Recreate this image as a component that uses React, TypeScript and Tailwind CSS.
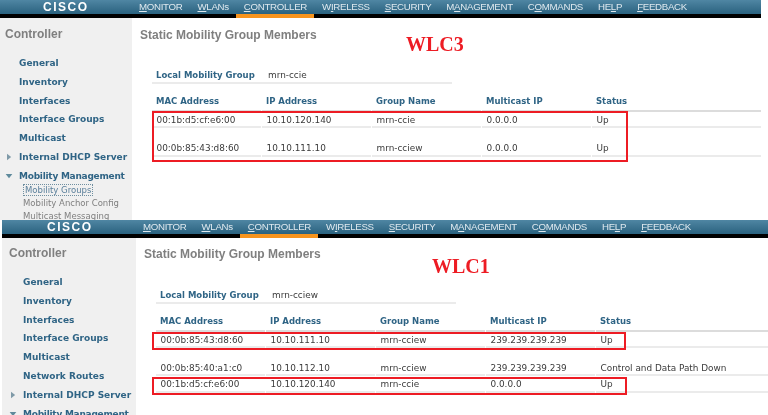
import React from 'react';

const navItems: [string, string, string][] = [
  ['', 'M', 'ONITOR'],
  ['', 'W', 'LANs'],
  ['', 'C', 'ONTROLLER'],
  ['W', 'I', 'RELESS'],
  ['', 'S', 'ECURITY'],
  ['M', 'A', 'NAGEMENT'],
  ['C', 'O', 'MMANDS'],
  ['HE', 'L', 'P'],
  ['', 'F', 'EEDBACK'],
];

function Nav() {
  return (
    <div className="h-[18px] flex border-b-[4px] border-black bg-gradient-to-b from-[#4f86a3] to-[#2a627f] shrink-0">
      <div className="w-[141px] pl-[45px] shrink-0 text-[12px] leading-[15px] font-bold tracking-[1.5px] text-white font-['Liberation_Sans',sans-serif]">
        CISCO
      </div>
      <div className="flex gap-[15px] font-['Liberation_Sans',sans-serif] text-[9.7px] tracking-[-0.3px] leading-[13px] text-[#dfe9ef]">
        {navItems.map(([a, b, c]) => (
          <div key={b + c} className="relative h-[18px] whitespace-nowrap">
            {a}
            <span className="underline">{b}</span>
            {c}
            {b === 'C' && <div className="absolute -left-[8px] -right-[7px] top-[14px] h-[4px] bg-[#f7941d]" />}
          </div>
        ))}
      </div>
    </div>
  );
}

function Side({ items, titlePad }: { items: string[]; titlePad: string }) {
  return (
    <div className="w-[134px] shrink-0 bg-[#f0f0f0] font-['DejaVu_Sans',sans-serif]">
      <div className={`pl-[7px] ${titlePad} text-[12px] leading-[16px] font-bold text-[#7f7f7f] font-['Liberation_Sans',sans-serif]`}>Controller</div>
      <div className="pt-[12px] pl-[21px]">
        {items.map((t) => (
          <div key={t} className="relative h-[18.8px] text-[9px] leading-[18.8px] font-bold text-[#2f6485] whitespace-nowrap">
            {t === 'Internal DHCP Server' && (
              <svg viewBox="0 0 6 8" className="absolute -left-[12px] top-[5px] w-[5px] h-[8px]"><path d="M0 0l5 4-5 4z" fill="#7f9aa8" /></svg>
            )}
            {t}
          </div>
        ))}
        <div className="relative text-[9px] tracking-[-0.25px] leading-[16px] mt-[1px] font-bold text-[#2f6485] whitespace-nowrap">
          <svg viewBox="0 0 8 6" className="absolute -left-[14px] top-[6px] w-[8px] h-[5px]"><path d="M0 0h8l-4 5z" fill="#5f8a9c" /></svg>
          Mobility Management
        </div>
        <div className="text-[8.5px] leading-[13px] text-[#7f7f7f] whitespace-nowrap">
          <div className="pl-[4px]"><span className="border border-dotted border-[#6f8fa0] px-px text-[#5a7f9a]">Mobility Groups</span></div>
          <div className="pl-[4px]">Mobility Anchor Config</div>
          <div className="pl-[4px]">Multicast Messaging</div>
        </div>
      </div>
    </div>
  );
}

const cols = 'grid grid-cols-[109px_109px_109px_109px_1fr] gap-x-px';

function Row({ cells, h }: { cells: string[]; h: string }) {
  return (
    <div className={cols}>
      {cells.map((c, i) => (
        <div key={i} className={`${h} pl-[4.5px] border-b-2 border-[#ebebeb] whitespace-nowrap text-[8.9px] text-[#3a3a3a]`}>
          {c}
        </div>
      ))}
    </div>
  );
}

function Members({ group, rows, titlePad, localGap }: { group: string; rows: { cells: string[]; h: string }[]; titlePad: string; localGap: string }) {
  return (
    <div className="flex-1 font-['DejaVu_Sans',sans-serif]">
      <div className={`pl-[8px] ${titlePad} text-[12px] leading-[16px] font-bold text-[#7f7f7f] font-['Liberation_Sans',sans-serif]`}>Static Mobility Group Members</div>
      <div className={`${localGap} ml-[20px] w-[300px] h-[16px] flex gap-[13px] border-b-2 border-[#ebebeb] text-[8.5px] leading-[15px]`}>
        <div className="w-[103px] pl-[4px] font-bold text-[#2f6485] whitespace-nowrap">Local Mobility Group</div>
        <div className="text-[8.9px] text-[#3a3a3a]">{group}</div>
      </div>
      <div className="ml-[20px] mt-[9px]">
        <div className={cols}>
          {['MAC Address', 'IP Address', 'Group Name', 'Multicast IP', 'Status'].map((c) => (
            <div key={c} className="h-[19px] pt-px pl-[4px] border-b-2 border-[#dcdcdc] text-[8.5px] leading-[15px] font-bold text-[#2f6485]">{c}</div>
          ))}
        </div>
        {rows.map((r) => (
          <Row key={r.cells[0]} cells={r.cells} h={r.h} />
        ))}
      </div>
    </div>
  );
}

const wlc3 = [
  { cells: ['00:1b:d5:cf:e6:00', '10.10.120.140', 'mrn-ccie', '0.0.0.0', 'Up'], h: 'h-[16px] leading-[16px]' },
  { cells: ['00:0b:85:43:d8:60', '10.10.111.10', 'mrn-cciew', '0.0.0.0', 'Up'], h: 'h-[29px] pt-[13px] leading-[14px]' },
];

const wlc1 = [
  { cells: ['00:0b:85:43:d8:60', '10.10.111.10', 'mrn-cciew', '239.239.239.239', 'Up'], h: 'h-[16px] leading-[16px]' },
  { cells: ['00:0b:85:40:a1:c0', '10.10.112.10', 'mrn-cciew', '239.239.239.239', 'Control and Data Path Down'], h: 'h-[28px] pt-[13px] leading-[14px]' },
  { cells: ['00:1b:d5:cf:e6:00', '10.10.120.140', 'mrn-ccie', '0.0.0.0', 'Up'], h: 'h-[17px] leading-[17px]' },
];

const sideTop = ['General', 'Inventory', 'Interfaces', 'Interface Groups', 'Multicast', 'Internal DHCP Server'];
const sideBottom = ['General', 'Inventory', 'Interfaces', 'Interface Groups', 'Multicast', 'Network Routes', 'Internal DHCP Server'];

function Label({ text, cls }: { text: string; cls: string }) {
  return <div className={`absolute ${cls} text-[20px] leading-[22px] font-bold text-[#ed1c24] font-['Liberation_Serif',serif]`}>{text}</div>;
}

function Box({ cls }: { cls: string }) {
  return <div className={`absolute ${cls} border-2 border-[#ed1c24]`} />;
}

export default function App() {
  return (
    <div className="w-[768px] h-[415px] overflow-hidden bg-white blur-[0.4px]">
      <div className="relative h-[220px] overflow-hidden">
        <div className="w-[763px] -ml-[2px] h-[220px] flex flex-col">
          <Nav />
          <div className="flex flex-1 overflow-hidden">
            <Side items={sideTop} titlePad="pt-[8px]" />
            <Members group="mrn-ccie" rows={wlc3} titlePad="pt-[9px]" localGap="mt-[25px]" />
          </div>
        </div>
        <Label text="WLC3" cls="left-[406px] top-[33px]" />
        <Box cls="left-[152px] top-[111px] w-[476px] h-[51px]" />
      </div>
      <div className="relative h-[195px] overflow-hidden">
        <div className="ml-[2px] h-[195px] flex flex-col">
          <Nav />
          <div className="flex flex-1 overflow-hidden">
            <Side items={sideBottom} titlePad="pt-[7px]" />
            <Members group="mrn-cciew" rows={wlc1} titlePad="pt-[8px]" localGap="mt-[26px]" />
          </div>
        </div>
        <Label text="WLC1" cls="left-[432px] top-[35px]" />
        <Box cls="left-[152px] top-[112px] w-[474px] h-[18px]" />
        <Box cls="left-[152px] top-[157px] w-[475px] h-[18px]" />
      </div>
    </div>
  );
}
